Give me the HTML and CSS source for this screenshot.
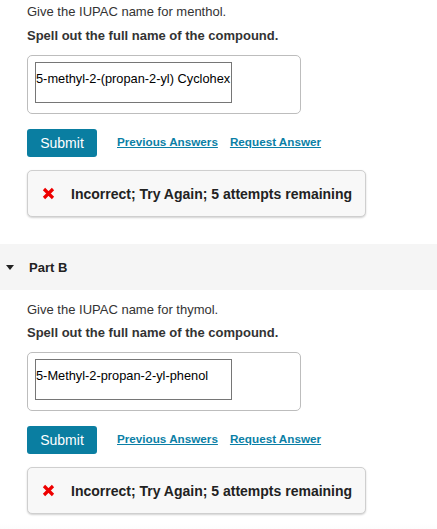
FILE: index.html
```html
<!DOCTYPE html>
<html>
<head>
<meta charset="utf-8">
<link rel="stylesheet" href="styles.css">
</head>
<body>
<section class="part part-a">
  <p class="prompt">Give the IUPAC name for menthol.</p>
  <p class="instr">Spell out the full name of the compound.</p>
  <div class="answer-box">
    <div class="answer-input">5-methyl-2-(propan-2-yl) Cyclohex</div>
  </div>
  <div class="actions">
    <button class="submit">Submit</button>
    <a class="link" href="#">Previous Answers</a>
    <a class="link" href="#">Request Answer</a>
  </div>
  <div class="feedback">
    <svg class="x-icon" width="13" height="13" viewBox="0 0 13 13"><path d="M2 2 L11 11 M11 2 L2 11" stroke="#e00" stroke-width="3.2" stroke-linecap="butt"/></svg>
    <span>Incorrect; Try Again; 5 attempts remaining</span>
  </div>
</section>
<div class="part-header">
  <span class="tri"></span>
  <span class="part-title">Part B</span>
</div>
<section class="part part-b">
  <p class="prompt">Give the IUPAC name for thymol.</p>
  <p class="instr">Spell out the full name of the compound.</p>
  <div class="answer-box">
    <div class="answer-input">5-Methyl-2-propan-2-yl-phenol</div>
  </div>
  <div class="actions">
    <button class="submit">Submit</button>
    <a class="link" href="#">Previous Answers</a>
    <a class="link" href="#">Request Answer</a>
  </div>
  <div class="feedback">
    <svg class="x-icon" width="13" height="13" viewBox="0 0 13 13"><path d="M2 2 L11 11 M11 2 L2 11" stroke="#e00" stroke-width="3.2" stroke-linecap="butt"/></svg>
    <span>Incorrect; Try Again; 5 attempts remaining</span>
  </div>
</section>
<div class="bottom-band"></div>
</body>
</html>
```
FILE: styles.css
```css
html, body {
  margin: 0;
  padding: 0;
  background: #fff;
}
body {
  font-family: "Liberation Sans", Arial, Helvetica, sans-serif;
  color: #333;
  font-size: 13px;
}
.part {
  padding: 0 27px;
}
.part-a {
  padding-top: 4px;
  padding-bottom: 27px;
}
.part-b {
  padding-top: 12px;
  padding-bottom: 9px;
}
.prompt {
  margin: 0;
  line-height: 16px;
}
.instr {
  margin: 8px 0 0;
  line-height: 16px;
  font-weight: bold;
}
.part-b .instr {
  margin-top: 7px;
}
.answer-box {
  margin-top: 11px;
  width: 258px;
  border: 1px solid #bdbdbd;
  border-radius: 5px;
  padding: 6px 7px 10px;
}
.answer-input {
  box-sizing: border-box;
  width: 197px;
  height: 41px;
  border: 1px solid #767676;
  padding: 9px 0 0 0;
  font-size: 12.8px;
  line-height: 14px;
  color: #000;
  white-space: nowrap;
  overflow: hidden;
}
.actions {
  display: flex;
  align-items: center;
  margin-top: 15px;
}
.submit {
  width: 70px;
  height: 28px;
  border: none;
  border-radius: 3px;
  background: #0a7ea1;
  color: #fff;
  font-family: "Liberation Sans", Arial, sans-serif;
  font-size: 14px;
  padding: 0;
  margin-right: 20px;
}
.link {
  font-size: 11.7px;
  font-weight: bold;
  color: #0b7fa6;
  text-decoration: underline;
  margin-right: 12px;
  margin-bottom: 3px;
}
.feedback {
  margin-top: 13px;
  box-sizing: border-box;
  width: 339px;
  height: 47px;
  border: 1px solid #cfcfcf;
  border-radius: 5px;
  background: #f8f8f8;
  box-shadow: 0 1px 2px rgba(0,0,0,0.18);
  display: flex;
  align-items: center;
  padding-left: 14px;
  font-size: 14px;
  font-weight: bold;
  color: #222;
}
.x-icon {
  margin-right: 16px;
  flex: none;
}
.part-header {
  height: 46px;
  background: #f5f5f5;
  display: flex;
  align-items: center;
  padding-left: 6px;
}
.tri {
  width: 0;
  height: 0;
  border-left: 4px solid transparent;
  border-right: 4px solid transparent;
  border-top: 5px solid #222;
  margin-right: 15px;
}
.part-title {
  font-weight: bold;
  font-size: 13px;
  color: #222;
}
.bottom-band {
  height: 20px;
  background: linear-gradient(#fff, #f7f7f7);
}
```
